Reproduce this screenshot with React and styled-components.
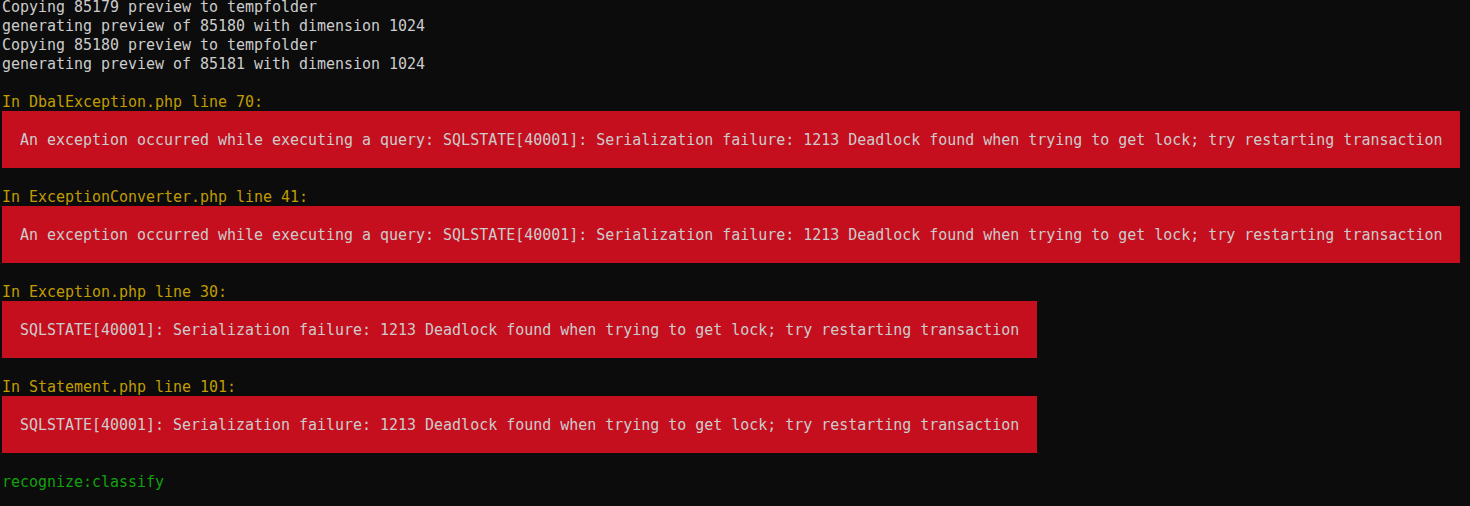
import React from 'react'
import styled, { createGlobalStyle } from 'styled-components'

const GlobalStyle = createGlobalStyle`
    html, body {
        margin: 0;
        padding: 0;
        background: #0c0c0c;
    }
`

const Terminal = styled.div`
    background: #0c0c0c;
    min-height: 506px;
    padding: 0 0 0 2px;
    margin-top: -3px;
    font-family: "DejaVu Sans Mono", "Liberation Mono", monospace;
    font-size: 14.96px;
    line-height: 19px;
    color: #cccccc;
    white-space: pre;
`

const Line = styled.div`
    box-sizing: border-box;
    height: 19px;
    padding-top: 1px;
    color: ${props => props.tone === 'yellow' ? '#c19c00' : props.tone === 'green' ? '#13a10e' : '#cccccc'};
`

const ErrorBlock = styled.div`
    width: fit-content;
    background: #c50f1f;
    color: #cccccc;
    padding: 20px 18px 18px 18px;
`

const errors = [
    {
        where: 'In DbalException.php line 70:',
        msg: 'An exception occurred while executing a query: SQLSTATE[40001]: Serialization failure: 1213 Deadlock found when trying to get lock; try restarting transaction'
    },
    {
        where: 'In ExceptionConverter.php line 41:',
        msg: 'An exception occurred while executing a query: SQLSTATE[40001]: Serialization failure: 1213 Deadlock found when trying to get lock; try restarting transaction'
    },
    {
        where: 'In Exception.php line 30:',
        msg: 'SQLSTATE[40001]: Serialization failure: 1213 Deadlock found when trying to get lock; try restarting transaction'
    },
    {
        where: 'In Statement.php line 101:',
        msg: 'SQLSTATE[40001]: Serialization failure: 1213 Deadlock found when trying to get lock; try restarting transaction'
    }
]

function App() {
  return (
    <>
        <GlobalStyle />
        <Terminal>
            <Line>Copying 85179 preview to tempfolder</Line>
            <Line>generating preview of 85180 with dimension 1024</Line>
            <Line>Copying 85180 preview to tempfolder</Line>
            <Line>generating preview of 85181 with dimension 1024</Line>
            {errors.map((e, i) => (
                <React.Fragment key={i}>
                    <Line />
                    <Line tone="yellow">{e.where}</Line>
                    <ErrorBlock>{e.msg}</ErrorBlock>
                </React.Fragment>
            ))}
            <Line />
            <Line tone="green">recognize:classify</Line>
        </Terminal>
    </>
  )
}

export default App
